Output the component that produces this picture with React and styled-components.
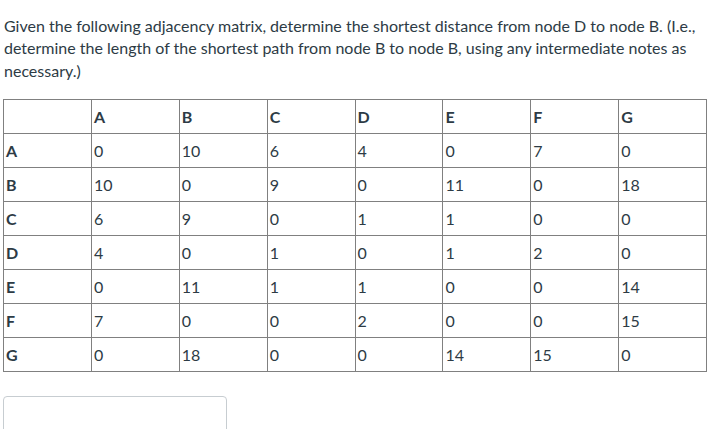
import React from 'react';
import styled, { createGlobalStyle } from 'styled-components';

const GlobalStyle = createGlobalStyle`
  html, body {
    margin: 0;
    padding: 0;
    background: #fff;
  }
  body {
    font-family: Lato, "Open Sans", "Liberation Sans", sans-serif;
    color: #2d3b45;
  }
`;

const labels = ['A', 'B', 'C', 'D', 'E', 'F', 'G'];

const matrix = [
  [0, 10, 6, 4, 0, 7, 0],
  [10, 0, 9, 0, 11, 0, 18],
  [6, 9, 0, 1, 1, 0, 0],
  [4, 0, 1, 0, 1, 2, 0],
  [0, 11, 1, 1, 0, 0, 14],
  [7, 0, 0, 2, 0, 0, 15],
  [0, 18, 0, 0, 14, 15, 0],
];

const App = () => {
  return (
    <StyledWrapper>
      <GlobalStyle />
      <Question>
        Given the following adjacency matrix, determine the shortest distance from node D to node B. (I.e.,
        determine the length of the shortest path from node B to node B, using any intermediate notes as
        necessary.)
      </Question>
      <Matrix>
        <tbody>
          <tr>
            <Cell />
            {labels.map((l) => (
              <Cell key={l} $head>{l}</Cell>
            ))}
          </tr>
          {matrix.map((row, i) => (
            <tr key={labels[i]}>
              <Cell $head>{labels[i]}</Cell>
              {row.map((v, j) => (
                <Cell key={j}>{v}</Cell>
              ))}
            </tr>
          ))}
        </tbody>
      </Matrix>
      <AnswerBox />
    </StyledWrapper>
  );
};

const StyledWrapper = styled.div`
  padding: 15px 3px 0 3px;
  width: 707px;
  box-sizing: border-box;
`;

const Question = styled.p`
  margin: 0 0 17px 1px;
  font-size: 16px;
  line-height: 22.4px;
  color: #2d3b45;
`;

const Matrix = styled.table`
  border-collapse: collapse;
  width: 704px;
  table-layout: fixed;
  border: 1px solid #222;
`;

const Cell = styled.td`
  border: 1px solid #808080;
  height: 34px;
  padding: 0 2px;
  box-sizing: border-box;
  text-align: left;
  vertical-align: middle;
  font-size: 16px;
  font-weight: ${(p) => (p.$head ? 700 : 400)};
  color: #2d3b45;
  line-height: 1;
`;

const AnswerBox = styled.div`
  margin-top: 24px;
  width: 224px;
  height: 40px;
  box-sizing: border-box;
  border: 1px solid #c7cdd1;
  border-radius: 4px;
  background: #fff;
`;

export default App;
